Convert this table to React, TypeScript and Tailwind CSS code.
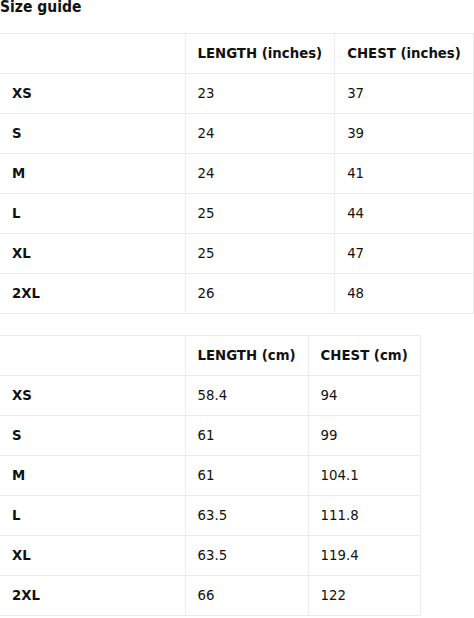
import React from "react";

const inches = [
  ["XS", "23", "37"],
  ["S", "24", "39"],
  ["M", "24", "41"],
  ["L", "25", "44"],
  ["XL", "25", "47"],
  ["2XL", "26", "48"],
];

const cm = [
  ["XS", "58.4", "94"],
  ["S", "61", "99"],
  ["M", "61", "104.1"],
  ["L", "63.5", "111.8"],
  ["XL", "63.5", "119.4"],
  ["2XL", "66", "122"],
];

function SizeTable({ headers, rows }: { headers: string[]; rows: string[][] }) {
  return (
    <table className="border-collapse whitespace-nowrap">
      <thead>
        <tr className="border-t border-[#ebebeb]">
          <th className="w-[185px] min-w-[185px] border-r border-[#ebebeb] h-[40px] px-3"></th>
          {headers.map((h) => (
            <th key={h} className="h-[40px] px-3 text-left font-bold border-r border-[#ebebeb]">
              {h}
            </th>
          ))}
        </tr>
      </thead>
      <tbody>
        {rows.map((r) => (
          <tr key={r[0]} className="border-y border-[#ebebeb]">
            <td className="h-[40px] px-3 font-bold border-r border-[#ebebeb]">{r[0]}</td>
            <td className="h-[40px] px-3 border-r border-[#ebebeb]">{r[1]}</td>
            <td className="h-[40px] px-3 border-r border-[#ebebeb]">{r[2]}</td>
          </tr>
        ))}
      </tbody>
    </table>
  );
}

export default function App() {
  return (
    <div className="w-[474px] h-[618px] overflow-hidden bg-white text-[#111] text-[13.3px] leading-[16px] font-['DejaVu_Sans',sans-serif]">
      <h2 className="text-[15.5px] font-bold leading-[16px] -mt-[1px] mb-[18px] font-['DejaVu_Sans_Condensed','DejaVu_Sans',sans-serif]">
        Size guide
      </h2>
      <SizeTable headers={["LENGTH (inches)", "CHEST (inches)"]} rows={inches} />
      <div className="h-[21px]" />
      <SizeTable headers={["LENGTH (cm)", "CHEST (cm)"]} rows={cm} />
    </div>
  );
}
